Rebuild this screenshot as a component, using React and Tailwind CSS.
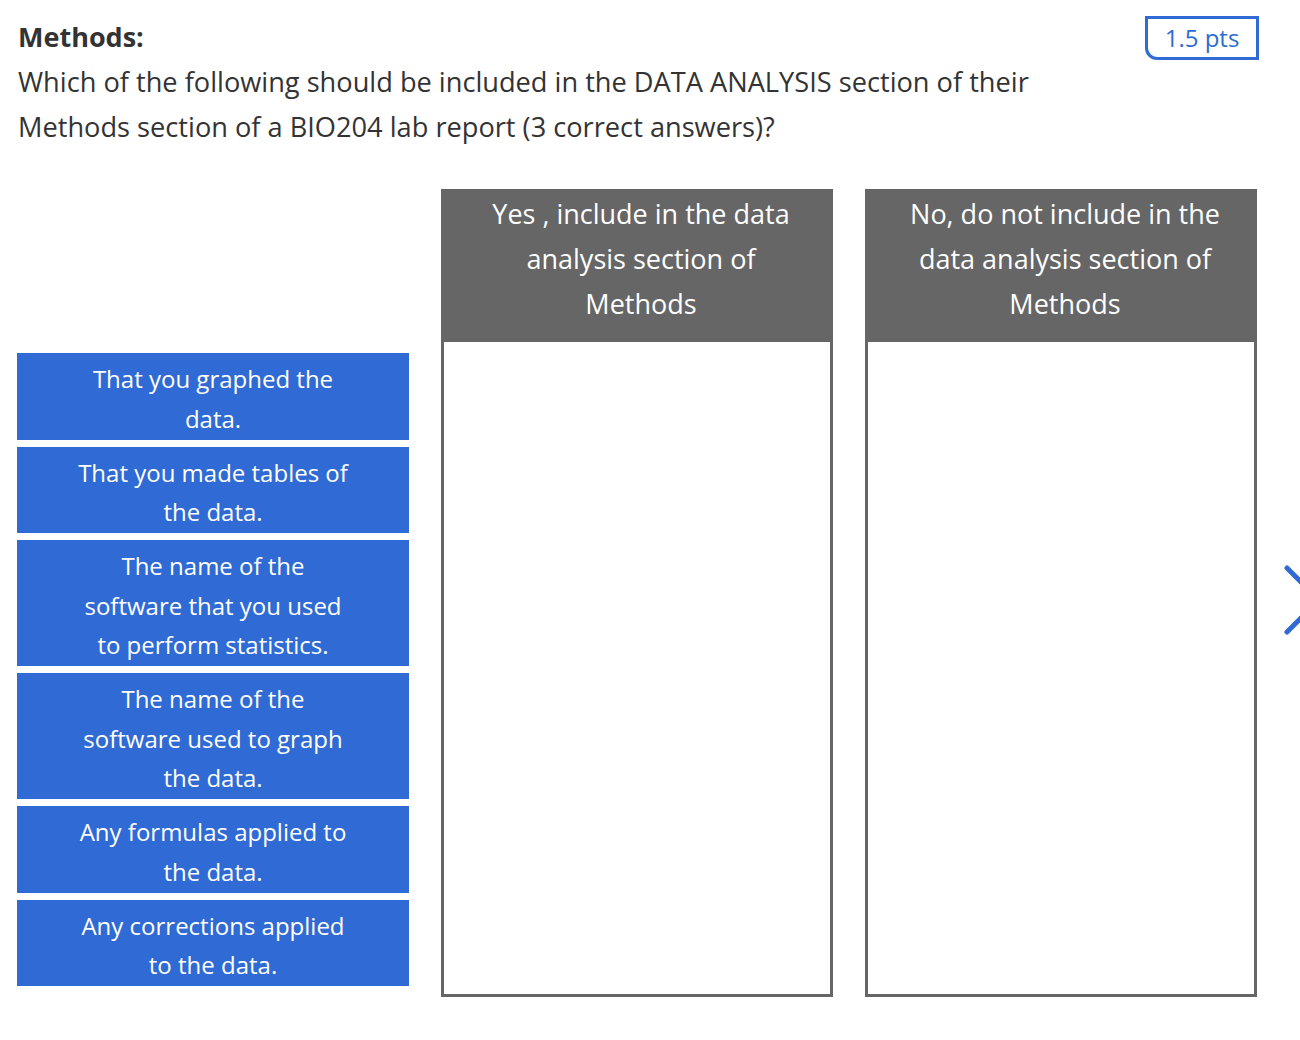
import React from "react";

const items = [
  "That you graphed the data.",
  "That you made tables of the data.",
  "The name of the software that you used to perform statistics.",
  "The name of the software used to graph the data.",
  "Any formulas applied to the data.",
  "Any corrections applied to the data.",
];

const buckets = [
  "Yes , include in the data analysis section of Methods",
  "No, do not include in the data analysis section of Methods",
];

export default function App() {
  return (
    <div
      className="relative w-[1300px] h-[1040px] overflow-hidden bg-white text-[#333]"
      style={{ fontFamily: '"Open Sans", sans-serif' }}
    >
      <div className="pl-[18px] pr-[41px] pt-[16px]">
        <div className="flex items-start justify-between">
          <div>
            <h2 className="text-[27px] font-bold leading-[44px] mt-[-1px]">Methods:</h2>
            <p className="text-[27.2px] leading-[45px] w-[1060px]">
              Which of the following should be included in the DATA ANALYSIS section of their Methods section of a BIO204 lab report (3 correct answers)?
            </p>
          </div>
          <div className="border-[3px] border-[#2f6bd4] rounded-bl-[12px] w-[114px] h-[44px] flex items-center justify-center text-[24px] text-[#2f6bd4]">
            1.5 pts
          </div>
        </div>

        <div className="flex gap-[32px] mt-[40px] ml-[-1px]">
          <div className="w-[392px] pt-[164px] flex flex-col gap-[7px]">
            {items.map((t) => (
              <div
                key={t}
                className="bg-[#306ad4] text-white text-[24px] leading-[39.5px] text-center px-[56px] pt-[6px] pb-[1.5px]"
              >
                {t}
              </div>
            ))}
          </div>
          {buckets.map((b) => (
            <div key={b} className="w-[392px] flex flex-col">
              <div className="bg-[#666] text-white text-[27px] leading-[45px] text-center h-[153px] pl-[44px] pr-[36px] pt-[2px]">
                {b}
              </div>
              <div className="h-[655px] border-[3px] border-t-0 border-[#666] bg-white" />
            </div>
          ))}
        </div>
      </div>

      <svg
        className="absolute left-[1282px] top-[562px]"
        width="30"
        height="76"
        viewBox="0 0 30 76"
        fill="none"
        stroke="#306ad4"
        strokeWidth="5"
        strokeLinecap="round"
      >
        <path d="M5 6 L25 26 M25 50 L5 70" />
      </svg>
    </div>
  );
}
